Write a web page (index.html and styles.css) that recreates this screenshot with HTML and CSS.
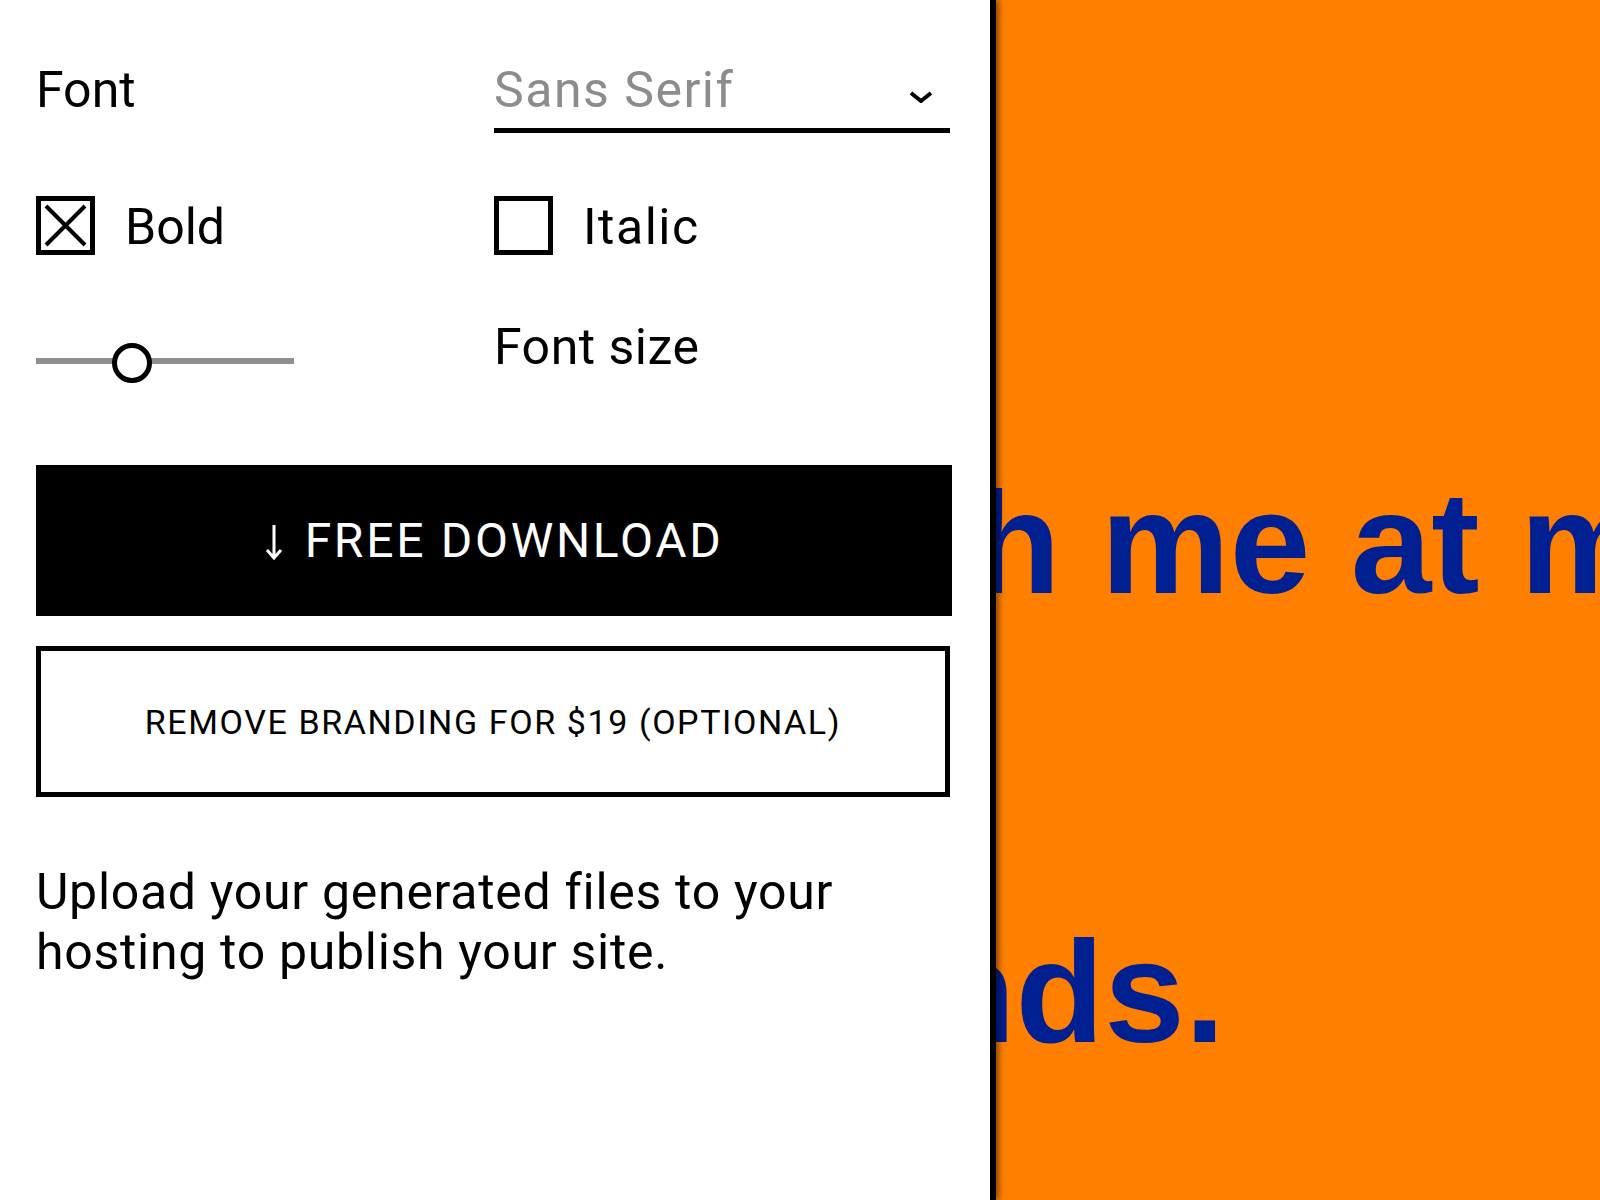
FILE: index.html
```html
<!DOCTYPE html>
<html lang="en">
<head>
<meta charset="utf-8">
<title>Export</title>
<link rel="stylesheet" href="styles.css">
</head>
<body>
<div class="app">
  <aside class="sidebar">
    <div class="row row-font">
      <div class="label">Font</div>
      <div class="select">
        <span class="select-value">Sans Serif</span>
        <svg class="chevron" width="26" height="12" viewBox="0 0 26 12"><path d="M3 2 L13 10 L23 2" fill="none" stroke="#000" stroke-width="4"/></svg>
      </div>
    </div>
    <div class="row row-checks">
      <label class="check">
        <span class="box checked">
          <svg width="49" height="49" viewBox="0 0 49 49"><path d="M5 5 L44 44 M44 5 L5 44" stroke="#000" stroke-width="4"/></svg>
        </span>
        <span class="check-text">Bold</span>
      </label>
      <label class="check">
        <span class="box"></span>
        <span class="check-text">Italic</span>
      </label>
    </div>
    <div class="row row-size">
      <div class="slider">
        <div class="track"></div>
        <div class="thumb"></div>
      </div>
      <div class="label">Font size</div>
    </div>
    <button class="btn btn-primary">
      <svg class="btn-icon" width="18" height="36" viewBox="0 0 18 36"><path d="M9 1 V34 M2 26 L9 34 L16 26" fill="none" stroke="#fff" stroke-width="3"/></svg>
      <span>FREE DOWNLOAD</span>
    </button>
    <button class="btn btn-outline">REMOVE BRANDING FOR $19 (OPTIONAL)</button>
    <p class="note">Upload your generated files to your hosting to publish your site.</p>
  </aside>
  <main class="preview">
    <div class="line line-1">h me at my email</div>
    <div class="line line-2">nds.</div>
  </main>
</div>
</body>
</html>
```

FILE: styles.css
```css
* { box-sizing: border-box; }
html, body { margin: 0; padding: 0; height: 100%; }
body {
  font-family: Roboto, "Liberation Sans", sans-serif;
  color: #000;
  background: #fff;
  overflow: hidden;
}
.app {
  display: flex;
  height: 1200px;
}
.sidebar {
  width: 996px;
  flex: none;
  background: #fff;
  border-right: 6px solid #000;
  padding: 0 38px 0 36px;
  box-shadow: 3px 0 6px rgba(0,0,0,0.45);
  position: relative;
  z-index: 1;
}
.row {
  display: grid;
  grid-template-columns: 458px 1fr;
}
.label, .check-text, .select-value, .note {
  font-size: 50px;
  line-height: 60px;
  letter-spacing: 0;
}
.row-font { padding-top: 60px; }
.select {
  display: flex;
  align-items: center;
  justify-content: space-between;
  padding-bottom: 8px;
  border-bottom: 5px solid #000;
  padding-right: 16px;
  margin-right: 2px;
}
.select-value { color: #8c8c8c; letter-spacing: 1.5px; }
.chevron { margin-top: 14px; }
.row-checks { margin-top: 60px; }
.check {
  display: flex;
  align-items: center;
  gap: 30px;
}
.box {
  width: 59px;
  height: 59px;
  border: 5px solid #000;
  display: flex;
  align-items: center;
  justify-content: center;
}
.check-text { margin-top: 4px; }
.check + .check .check-text { letter-spacing: 1.5px; }
.row-size { margin-top: 60px; }
.row-size .label { letter-spacing: 0.5px; }
.slider {
  position: relative;
  width: 258px;
  height: 40px;
  margin-top: 24px;
  display: flex;
  align-items: center;
}
.track {
  width: 100%;
  height: 6px;
  background: #8f8f8f;
}
.thumb {
  position: absolute;
  left: 76px;
  top: 2px;
  width: 40px;
  height: 40px;
  border: 5px solid #000;
  border-radius: 50%;
  background: #fff;
}
.btn {
  width: 100%;
  height: 151px;
  font-family: Roboto, "Liberation Sans", sans-serif;
  cursor: pointer;
  padding: 0;
}
.btn-primary {
  display: flex;
  align-items: center;
  justify-content: center;
  gap: 22px;
  margin-top: 84px;
  background: #000;
  color: #fff;
  border: none;
  font-size: 48px;
  letter-spacing: 2.7px;
}
.btn-icon { flex: none; margin-top: 2px; }
.btn-outline {
  display: block;
  width: calc(100% - 2px);
  margin-top: 30px;
  background: #fff;
  color: #000;
  border: 5px solid #000;
  font-size: 34px;
  letter-spacing: 1.6px;
}
.note {
  margin: 65px 0 0;
  letter-spacing: 0.7px;
}
.preview {
  flex: 1;
  background: #ff7f00;
  overflow: hidden;
  padding-top: 471px;
  font-family: "Liberation Sans", Arial, sans-serif;
  font-weight: bold;
  font-size: 145px;
  line-height: 145px;
  color: #001f91;
  white-space: nowrap;
}
.line-1 { margin-left: -24px; }
.line-2 { margin-left: -69px; margin-top: 304px; }
```
